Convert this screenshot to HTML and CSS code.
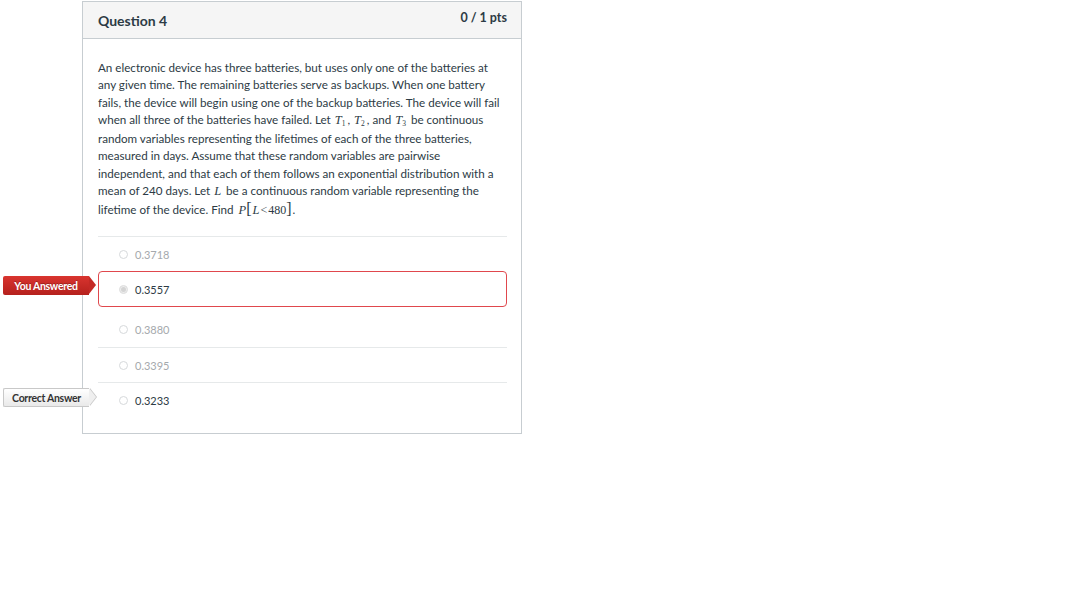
FILE: index.html
```html
<!DOCTYPE html>
<html>
<head>
<meta charset="utf-8">
<link rel="stylesheet" href="styles.css">
</head>
<body>
<div class="page">
  <div class="card">
    <div class="header">
      <span class="title">Question 4</span>
      <span class="pts">0 / 1 pts</span>
    </div>
    <div class="body">
      <p class="text">An electronic device has three batteries, but uses only one of the batteries at any given time. The remaining batteries serve as backups. When one battery fails, the device will begin using one of the backup batteries. The device will fail when all three of the batteries have failed. Let <span class="m">T<sub>1</sub></span>, <span class="m">T<sub>2</sub></span>, and <span class="m">T<sub>3</sub></span> be continuous random variables representing the lifetimes of each of the three batteries, measured in days. Assume that these random variables are pairwise independent, and that each of them follows an exponential distribution with a mean of 240 days. Let <span class="m">L</span> be a continuous random variable representing the lifetime of the device. Find <span class="formula"><span class="mi">P</span><span class="br">[</span><span class="mi">L</span><span class="op">&lt;</span><span class="mn">480</span><span class="br">]</span></span>.</p>
      <div class="answers">
        <div class="answer"><span class="radio"></span><span class="val">0.3718</span></div>
        <div class="answer chosen">
          <span class="tag wrong">You Answered</span>
          <span class="radio on"></span><span class="val dark">0.3557</span>
        </div>
        <div class="answer nb"><span class="radio"></span><span class="val">0.3880</span></div>
        <div class="answer"><span class="radio"></span><span class="val">0.3395</span></div>
        <div class="answer">
          <span class="tag right">Correct Answer</span>
          <span class="radio"></span><span class="val dark">0.3233</span>
        </div>
      </div>
    </div>
  </div>
</div>
</body>
</html>
```

FILE: styles.css
```css
* { box-sizing: border-box; }
body {
  margin: 0;
  background: #fff;
  font-family: Lato, "Open Sans", sans-serif;
  color: #2d3b45;
}
.page {
  padding: 1px 0 0 82px;
}
.card {
  width: 440px;
  border: 1px solid #c7cdd1;
}
.header {
  height: 37px;
  background: #f5f5f5;
  border-bottom: 1px solid #c7cdd1;
  display: flex;
  justify-content: space-between;
  align-items: flex-start;
  padding: 0 14px 0 15px;
}
.title {
  font-size: 14px;
  font-weight: bold;
  margin-top: 10px;
}
.pts {
  font-size: 12.5px;
  font-weight: bold;
  margin-top: 8px;
}
.body {
  padding: 20px 14px 16px 15px;
}
.text {
  margin: 0;
  font-size: 11.65px;
  line-height: 17.45px;
}
.m {
  font-family: "Liberation Serif", serif;
  font-style: italic;
  font-size: 12.5px;
  margin: 0 2px 0 1px;
}
.m sub {
  font-size: 7.5px;
  font-style: normal;
  line-height: 0;
  vertical-align: -2px;
}
.formula {
  font-family: "Liberation Serif", serif;
  margin-left: 2px;
}
.mi {
  font-style: italic;
  font-size: 12.5px;
}
.op {
  font-size: 12px;
  margin: 0 1px;
}
.mn {
  font-size: 12px;
}
.br {
  font-size: 16px;
  line-height: 0;
  margin: 0 1px 0 0;
}
.answers {
  margin-top: 17px;
}
.answer {
  position: relative;
  height: 35px;
  border-top: 1px solid #e6e9ea;
  display: flex;
  align-items: center;
  padding-left: 21px;
  font-size: 11px;
}
.answer.chosen {
  height: 36px;
  border: 1px solid #e0484d;
  border-radius: 4px;
  margin-bottom: 5px;
  padding-left: 20px;
}
.answer.nb { border-top: none; }
.radio {
  width: 9px;
  height: 9px;
  border-radius: 50%;
  border: 1px solid #d6d9db;
  background: #fff;
  margin-right: 7px;
}
.radio.on {
  background: #d4d4d4;
  border-color: #e2e2e2;
  box-shadow: inset 0 0 0 1px #eee;
}
.val { color: #a5a9ad; }
.val.dark { color: #2d3b45; }
.tag {
  position: absolute;
  left: -96px;
  top: 50%;
  margin-top: -13px;
  height: 19px;
  width: 86px;
  font-size: 10.5px;
  font-weight: bold;
  letter-spacing: -0.3px;
  display: flex;
  align-items: center;
  justify-content: center;
  border-radius: 2px 0 0 2px;
}
.tag::after {
  content: "";
  position: absolute;
  right: -7px;
  top: 0;
  width: 0;
  height: 0;
  border-top: 9.5px solid transparent;
  border-bottom: 9.5px solid transparent;
}
.tag.wrong {
  color: #fff;
  background: linear-gradient(#d9342f, #b5211d);
  text-shadow: 0 -1px 0 rgba(0,0,0,0.25);
}
.tag.wrong::after { border-left: 7px solid #c42a26; }
.tag.right {
  left: -95px;
  margin-top: -12px;
  color: #333;
  background: linear-gradient(#ffffff, #e9e9e9);
  border: 1px solid #c8c8c8;
  border-right: none;
}
.tag.right::after {
  top: -1px;
  border-left: 7px solid #efefef;
  filter: drop-shadow(1px 0 0 #c8c8c8);
}
```
